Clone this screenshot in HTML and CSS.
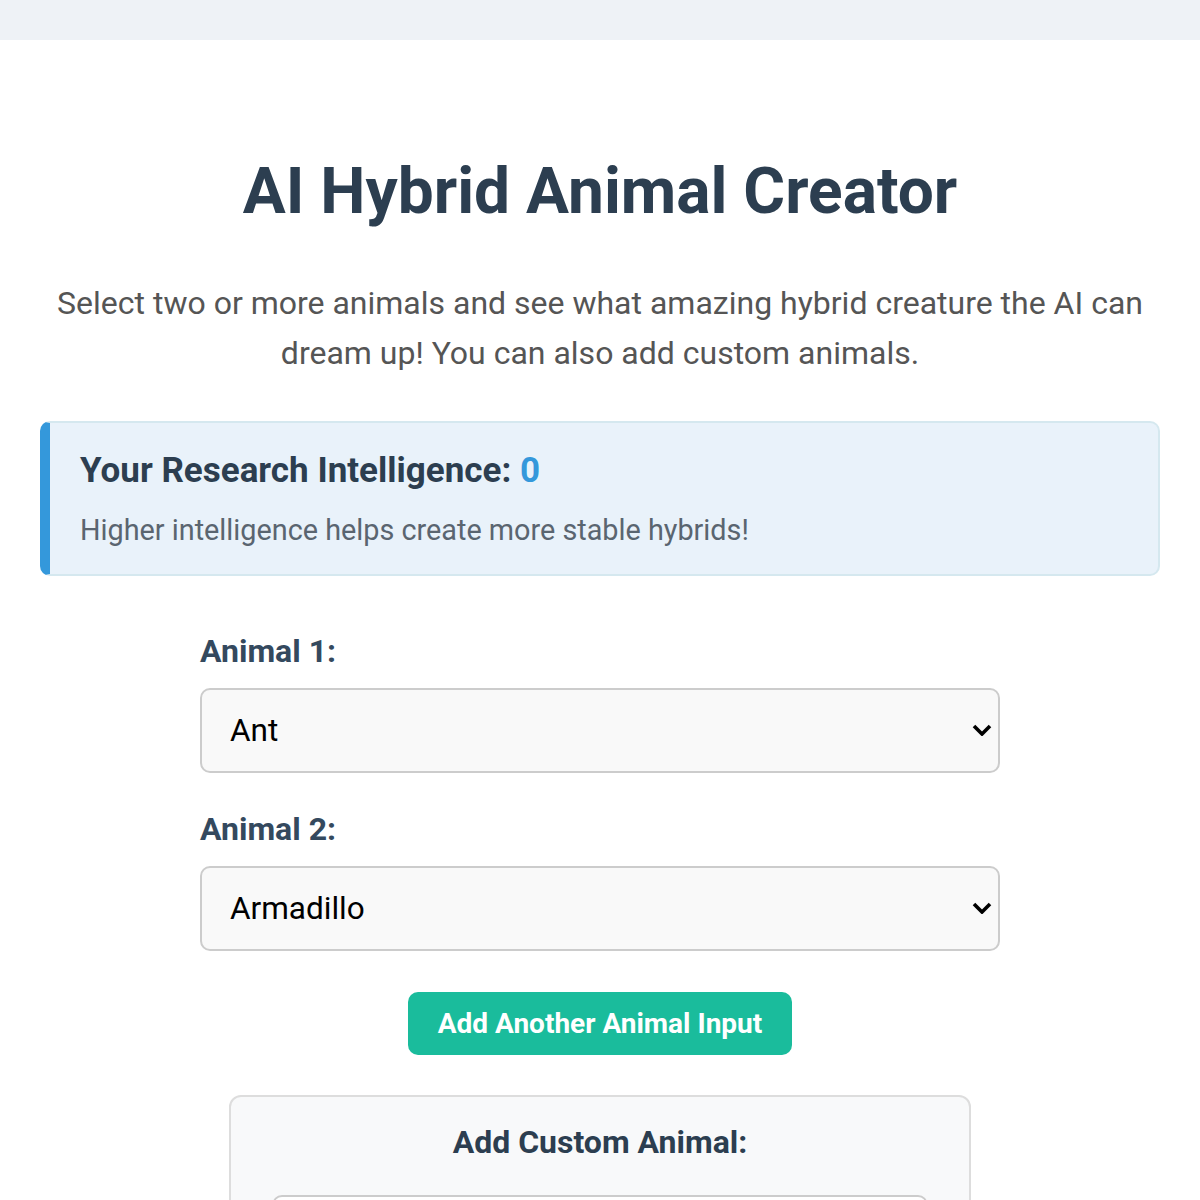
FILE: index.html
```html
<!DOCTYPE html>
<html lang="en">
<head>
  <meta charset="UTF-8" />
  <title>AI Hybrid Animal Creator</title>
  <link rel="stylesheet" href="styles.css">
</head>
<body>
  <div class="container">
    <h1>AI Hybrid Animal Creator</h1>
    <p class="intro">Select two or more animals and see what amazing hybrid creature the AI can dream up! You can also add custom animals.</p>

    <div class="intel-box">
      <h3>Your Research Intelligence: <span class="intel-score">0</span></h3>
      <p>Higher intelligence helps create more stable hybrids!</p>
    </div>

    <div class="animal-form">
      <div class="field">
        <label for="animal1">Animal 1:</label>
        <div class="select-wrap">
          <select id="animal1">
            <option>Ant</option>
            <option>Armadillo</option>
            <option>Bear</option>
          </select>
          <svg class="chevron" viewBox="0 0 20 12"><path d="M2 2 L10 10 L18 2" fill="none" stroke="#000" stroke-width="3.6"/></svg>
        </div>
      </div>
      <div class="field">
        <label for="animal2">Animal 2:</label>
        <div class="select-wrap">
          <select id="animal2">
            <option>Ant</option>
            <option selected>Armadillo</option>
            <option>Bear</option>
          </select>
          <svg class="chevron" viewBox="0 0 20 12"><path d="M2 2 L10 10 L18 2" fill="none" stroke="#000" stroke-width="3.6"/></svg>
        </div>
      </div>

      <div class="btn-row">
        <button class="btn-add">Add Another Animal Input</button>
      </div>

      <div class="custom-box">
        <h3>Add Custom Animal:</h3>
        <input type="text" class="custom-input" placeholder="">
      </div>
    </div>
  </div>
</body>
</html>
```

FILE: styles.css
```css
body { margin:0; padding-top:40px; background:#eef2f6; font-family:Roboto, "Liberation Sans", sans-serif; }
.container { background:#fff; padding:114px 40px 60px; min-height:1200px; }

h1 { margin:0; text-align:center; font-size:64px; font-weight:700; color:#2c3e50; }
.intro { margin:49px 0 43px; text-align:center; font-size:32px; line-height:50px; color:#555; }

.intel-box {
  background:#e9f2fa; border:2px solid #d5e8ef; border-left:10px solid #3498db;
  border-radius:10px; padding:27px 30px 27px;
}
.intel-box h3 { margin:0 0 22px; font-size:35px; color:#2c3e50; }
.intel-score { color:#3498db; }
.intel-box p { margin:0; font-size:28.8px; color:#5a6570; }

.animal-form { width:800px; margin:56px auto 0; }
.field { margin-bottom:37px; }
.field label { display:block; margin-bottom:18px; font-size:32px; font-weight:700; color:#34495e; }
.select-wrap { position:relative; }
.select-wrap select {
  width:100%; height:85px; padding:0 28px; appearance:none; -webkit-appearance:none;
  font-family:Roboto, "Liberation Sans", sans-serif; font-size:31.5px; color:#000;
  background:#f9f9f9; border:2px solid #ccc; border-radius:10px;
}
.chevron { position:absolute; right:8px; top:36px; width:20px; height:12px; pointer-events:none; }

.btn-row { text-align:center; margin-top:41px; }
.btn-add {
  width:384px; height:63px; border:none; border-radius:10px; background:#1abc9c; color:#fff;
  font-family:Roboto, "Liberation Sans", sans-serif; font-size:28px; font-weight:700; cursor:pointer;
}

.custom-box {
  width:742px; box-sizing:border-box; margin:40px auto 0; padding:26px 41px 40px;
  background:#f8f9fa; border:2px solid #ddd; border-radius:12px; text-align:center;
}
.custom-box h3 { margin:0 0 34px; font-size:32px; color:#2c3e50; }
.custom-input { width:100%; box-sizing:border-box; height:84px; border:2px solid #ccc; border-radius:10px; background:#fff; }
```
